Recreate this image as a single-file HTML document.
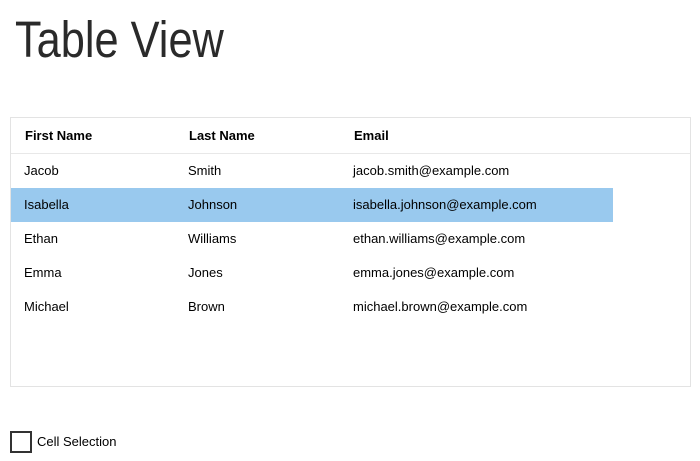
<!DOCTYPE html>
<html><head><style>
body{margin:0;width:700px;height:461px;background:#fff;font-family:"Liberation Sans",sans-serif;color:#000;position:relative;overflow:hidden}
h1{position:absolute;left:15px;top:10px;margin:0;font-weight:normal;font-size:51px;line-height:60px;transform:scaleX(0.85);transform-origin:left top;color:#2a2a2a}
.tbl{position:absolute;left:10px;top:117px;width:679px;height:268px;border:1px solid #e3e3e3}
.hdr{position:absolute;left:0;top:0;width:679px;height:35px;border-bottom:1px solid #e8e8e8;font-weight:bold;font-size:13px}
.row{position:absolute;left:0;height:34px;width:602px;font-size:13px}
.c{position:absolute;top:0;line-height:34px}
.sel{background:#99c9ee}
.cb{position:absolute;left:10px;top:431px;width:18px;height:18px;border:2px solid #333}
.lbl{position:absolute;left:37px;top:433px;font-size:13px;line-height:18px}
</style></head><body>
<h1>Table View</h1>
<div class="tbl">
<div class="hdr"><span class="c" style="left:14px;line-height:36px">First Name</span><span class="c" style="left:178px;line-height:36px">Last Name</span><span class="c" style="left:343px;line-height:36px">Email</span></div>
<div class="row" style="top:36px"><span class="c" style="left:13px">Jacob</span><span class="c" style="left:177px">Smith</span><span class="c" style="left:342px">jacob.smith@example.com</span></div>
<div class="row sel" style="top:70px"><span class="c" style="left:13px">Isabella</span><span class="c" style="left:177px">Johnson</span><span class="c" style="left:342px">isabella.johnson@example.com</span></div>
<div class="row" style="top:104px"><span class="c" style="left:13px">Ethan</span><span class="c" style="left:177px">Williams</span><span class="c" style="left:342px">ethan.williams@example.com</span></div>
<div class="row" style="top:138px"><span class="c" style="left:13px">Emma</span><span class="c" style="left:177px">Jones</span><span class="c" style="left:342px">emma.jones@example.com</span></div>
<div class="row" style="top:172px"><span class="c" style="left:13px">Michael</span><span class="c" style="left:177px">Brown</span><span class="c" style="left:342px">michael.brown@example.com</span></div>
</div>
<div class="cb"></div>
<div class="lbl">Cell Selection</div>
</body></html>
